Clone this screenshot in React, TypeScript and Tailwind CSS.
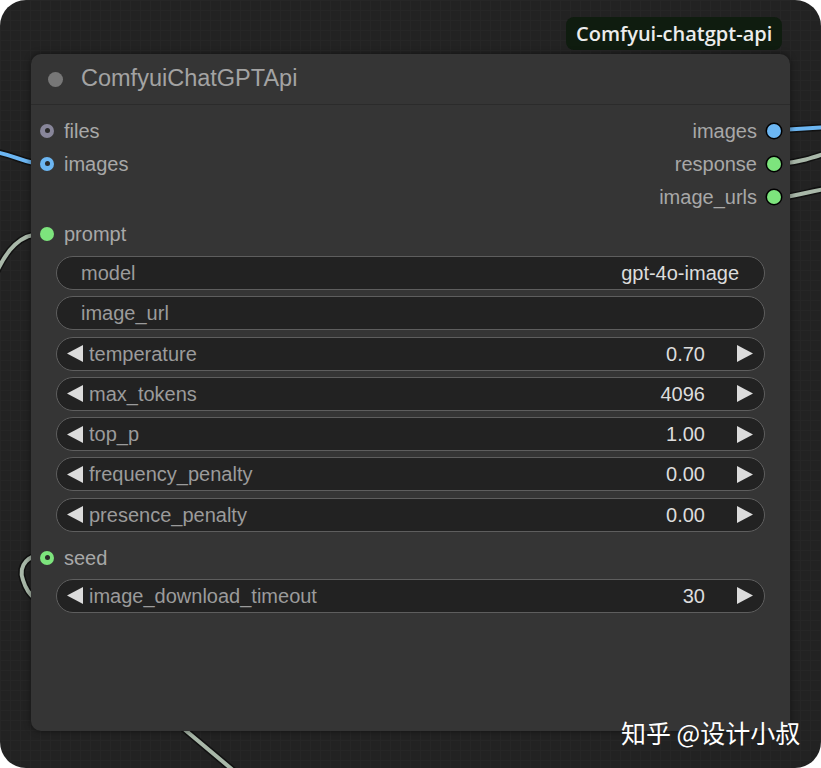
import React from "react";

type Dot = { color: string; ring?: boolean; hollow?: boolean };

function SlotDot({ color, ring, hollow }: Dot) {
  return (
    <span
      className={`relative flex h-[14px] w-[14px] shrink-0 items-center justify-center rounded-full ${ring ? "ring-[1.5px] ring-black" : ""}`}
      style={{ backgroundColor: color }}
    >
      {hollow && <span className="h-[5px] w-[5px] rounded-full bg-[#2a2a2a]" />}
    </span>
  );
}

function Arrow({ dir }: { dir: "l" | "r" }) {
  return (
    <svg width="16" height="17" viewBox="0 0 16 17" className="shrink-0">
      {dir === "l" ? (
        <polygon points="16,0 16,17 0,8.5" fill="#dcdcdc" />
      ) : (
        <polygon points="0,0 0,17 16,8.5" fill="#dcdcdc" />
      )}
    </svg>
  );
}

function Combo({ label, value }: { label: string; value?: string }) {
  return (
    <div className="flex h-[34px] items-center justify-between rounded-full border border-[#5e5e5e] bg-[#222222] pl-[24px] pr-[25px]">
      <span className="text-[#9b9b9b]">{label}</span>
      {value && <span className="text-[#dcdcdc]">{value}</span>}
    </div>
  );
}

function Slider({ label, value }: { label: string; value: string }) {
  return (
    <div className="flex h-[34px] items-center rounded-full border border-[#5e5e5e] bg-[#222222] pl-[10px] pr-[11px]">
      <Arrow dir="l" />
      <span className="ml-[6px] flex-1 text-[#9b9b9b]">{label}</span>
      <span className="mr-[32px] text-[#dcdcdc]">{value}</span>
      <Arrow dir="r" />
    </div>
  );
}

function Wire({ d, color }: { d: string; color: string }) {
  return (
    <g fill="none" strokeLinecap="round">
      <path d={d} stroke="#111" strokeWidth="7" />
      <path d={d} stroke={color} strokeWidth="4" />
    </g>
  );
}

export default function App() {
  const sliders = [
    ["temperature", "0.70"],
    ["max_tokens", "4096"],
    ["top_p", "1.00"],
    ["frequency_penalty", "0.00"],
    ["presence_penalty", "0.00"],
  ];

  return (
    <div className="h-[768px] w-[821px] bg-white font-['Liberation_Sans',Arial,sans-serif]">
      <div className="relative h-full w-full overflow-hidden rounded-[26px] bg-[#222222] bg-[linear-gradient(to_right,#262626_1px,transparent_1px),linear-gradient(to_bottom,#262626_1px,transparent_1px)] bg-[size:10px_10px]">
        {/* wires */}
        <svg className="absolute inset-0" width="821" height="768" viewBox="0 0 821 768">
          <Wire d="M -5 152 C 15 155, 25 164, 44 164" color="#6cb6f2" />
          <Wire d="M 47 234 C 20 232, 6 250, -6 278" color="#a9b8a9" />
          <Wire d="M 47 557 C 28 552, 18 566, 23 580 C 26 590, 30 594, 34 598" color="#a9b8a9" />
          <Wire d="M 178 724 L 240 776" color="#a9b8a9" />
          <Wire d="M 780 130 L 830 127" color="#6cb6f2" />
          <Wire d="M 780 164 C 800 162, 812 158, 830 152" color="#a9b8a9" />
          <Wire d="M 780 198 C 800 195, 812 191, 830 188" color="#a9b8a9" />
        </svg>

        {/* group badge */}
        <div className="absolute left-[566px] top-[17px] rounded-[8px] bg-[#0f1c0f] px-[10px] py-[3px] font-['Open_Sans',sans-serif] text-[20px] font-semibold leading-[27px] text-[#ececec]">
          Comfyui-chatgpt-api
        </div>

        {/* node */}
        <div className="absolute left-[31px] top-[54px] flex h-[677px] w-[759px] flex-col rounded-[10px] bg-[#353535] text-[20px] shadow-[0_0_6px_rgba(0,0,0,0.5)]">
          <div className="flex h-[51px] items-center gap-[18px] border-b border-[#2b2b2b] pl-[17px]">
            <span className="h-[15px] w-[15px] rounded-full bg-[#777777]" />
            <span className="text-[23.5px] text-[#a3a3a3]">ComfyuiChatGPTApi</span>
          </div>

          <div className="relative flex flex-col pt-[9px]">
            <div className="flex h-[33px] items-center justify-between pl-[9px] pr-[9px]">
              <div className="flex items-center gap-[10px]">
                <SlotDot color="#88869a" hollow />
                <span className="text-[#a8a8a8]">files</span>
              </div>
              <div className="flex items-center gap-[10px]">
                <span className="text-[#a8a8a8]">images</span>
                <SlotDot color="#6cb6f2" ring />
              </div>
            </div>
            <div className="flex h-[33px] items-center justify-between pl-[9px] pr-[9px]">
              <div className="flex items-center gap-[10px]">
                <SlotDot color="#6cb6f2" hollow />
                <span className="text-[#a8a8a8]">images</span>
              </div>
              <div className="flex items-center gap-[10px]">
                <span className="text-[#a8a8a8]">response</span>
                <SlotDot color="#7de47d" ring />
              </div>
            </div>
            <div className="flex h-[34px] items-center justify-end pr-[9px]">
              <div className="flex items-center gap-[10px]">
                <span className="text-[#a8a8a8]">image_urls</span>
                <SlotDot color="#7de47d" ring />
              </div>
            </div>
            <div className="flex h-[40px] items-center pl-[9px]">
              <div className="flex items-center gap-[10px]">
                <SlotDot color="#7de47d" />
                <span className="text-[#a8a8a8]">prompt</span>
              </div>
            </div>
          </div>

          <div className="flex flex-col gap-[6.3px] px-[25px] pt-[2px]">
            <Combo label="model" value="gpt-4o-image" />
            <Combo label="image_url" />
            {sliders.map(([l, v]) => (
              <Slider key={l} label={l} value={v} />
            ))}
          </div>

          <div className="flex h-[47px] items-center pl-[9px] pt-[5px]">
            <div className="flex items-center gap-[10px]">
              <SlotDot color="#7de47d" hollow />
              <span className="text-[#a8a8a8]">seed</span>
            </div>
          </div>
          <div className="px-[25px]">
            <Slider label="image_download_timeout" value="30" />
          </div>
        </div>

        {/* watermark */}
        <div className="absolute left-[621px] top-[716px] font-['Noto_Sans_CJK_SC',sans-serif] text-[25px] leading-[32px] text-white">
          知乎 @设计小叔
        </div>
      </div>
    </div>
  );
}
